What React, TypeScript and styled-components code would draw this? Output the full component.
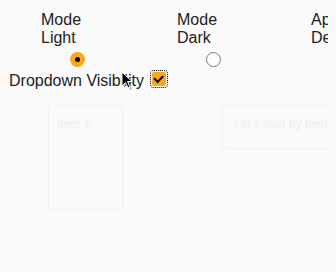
import React from "react";
import styled, { createGlobalStyle } from "styled-components";

const Global = createGlobalStyle`
  html, body { background: #fafafa; }
  body {
    margin: 8px;
    font-family: "Liberation Sans", Arial, sans-serif;
    font-size: 16px;
    color: #222;
  }
`;

const Page = styled.div`
  position: relative;
  padding-top: 3px;
`;

const Modes = styled.div`
  display: grid;
  grid-template-columns: 136px 134px auto;
`;

const Option = styled.label`
  display: flex;
  flex-direction: column;
  align-items: flex-start;
  padding-left: 33px;
  white-space: nowrap;
`;

const Radio = styled.input.attrs({ type: "radio", name: "mode" })`
  appearance: none;
  box-sizing: border-box;
  width: 15px;
  height: 15px;
  margin: 5px 0 0 29px;
  border-radius: 50%;
  border: 1px solid #7a7a7a;
  background: #fff;
  display: grid;
  place-items: center;
  &:checked {
    border: none;
    background: #f6a71d;
  }
  &:checked::after {
    content: "";
    width: 5px;
    height: 5px;
    border-radius: 50%;
    background: #000;
  }
`;

const VisRow = styled.label`
  display: flex;
  align-items: center;
  margin-top: 5px;
  padding-left: 1px;
  line-height: 18px;
`;

const Check = styled.input.attrs({ type: "checkbox" })`
  appearance: none;
  box-sizing: border-box;
  width: 14px;
  height: 14px;
  margin: -4px 0 0 8px;
  border-radius: 2px;
  background: #f6a71d;
  outline: 1px dotted #000;
  outline-offset: 1px;
  display: grid;
  place-items: center;
  &:checked::after {
    content: "";
    width: 7px;
    height: 3.5px;
    border-left: 2.5px solid #000;
    border-bottom: 2.5px solid #000;
    transform: translate(0, -1px) rotate(-45deg);
  }
`;

const Panels = styled.div`
  display: flex;
  align-items: flex-start;
  gap: 99px;
  margin-top: 15px;
  padding-left: 40px;
`;

const Panel = styled.div<{ $w: number; $h: number }>`
  width: ${(p) => p.$w}px;
  height: ${(p) => p.$h}px;
  box-sizing: border-box;
  border: 1px solid #f2f2f2;
  border-radius: 2px;
  box-shadow: 0 1px 3px rgba(0, 0, 0, 0.012);
  padding: 11px 8px 0 11px;
  font-size: 12px;
  color: #efefef;
  white-space: nowrap;
  overflow: hidden;
  flex-shrink: 0;
`;

const FirstPanel = styled(Panel)`
  padding-left: 8px;
`;

const Cursor = styled.svg`
  position: absolute;
  left: 113px;
  top: 63px;
`;

export default function App() {
  return (
    <Page>
      <Global />
      <Modes>
        <Option>
          <span>Mode</span>
          <span>Light</span>
          <Radio defaultChecked />
        </Option>
        <Option>
          <span>Mode</span>
          <span>Dark</span>
          <Radio />
        </Option>
        <Option>
          <span>App</span>
          <span>Default</span>
          <Radio />
        </Option>
      </Modes>
      <VisRow>
        Dropdown Visibility
        <Check defaultChecked />
      </VisRow>
      <Panels>
        <FirstPanel $w={75} $h={105}>Item 1</FirstPanel>
        <Panel $w={130} $h={44}>Let's start by being smart</Panel>
      </Panels>
      <Cursor width="16" height="22" viewBox="0 0 16 22">
        <path d="M3 3 L3 17 L6.5 13.5 L9 19 L11 18 L8.5 12.5 L13 12.5 Z" fill="rgba(0,0,0,0.25)" />
        <path d="M1 1 L1 15 L4.5 11.5 L7 17 L9 16 L6.5 10.5 L11 10.5 Z" fill="#000" stroke="#fff" strokeWidth="1" />
      </Cursor>
    </Page>
  );
}
